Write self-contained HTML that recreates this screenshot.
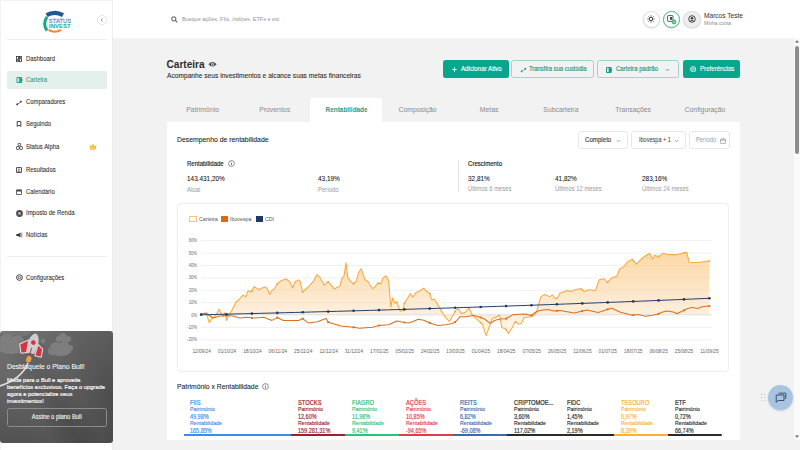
<!DOCTYPE html>
<html><head><meta charset="utf-8">
<style>
*{margin:0;padding:0;box-sizing:border-box}
html,body{width:800px;height:450px;overflow:hidden;background:#f2f2f2;font-family:"Liberation Sans",sans-serif;color:#2b2b2b}
.nav,.col,.val,.sk{-webkit-text-stroke:0.08px currentColor}
.dd,.lg{-webkit-text-stroke:0}
.a{position:absolute;white-space:nowrap}
#side{position:absolute;left:0;top:0;width:113px;height:450px;background:#fff;box-shadow:inset -1px 0 0 #ededed,inset 1px 1px 0 #f2f2f2}
#hdr{position:absolute;left:113px;top:0;width:687px;height:38px;background:#fff}
.nav{position:absolute;left:7px;width:100px;height:18px;font-size:5.9px;color:#2e2e2e}
.nav .t{position:absolute;left:19px;top:0;line-height:18px;font-size:6.6px;transform:scaleX(.9);transform-origin:0 50%}
.nav svg{position:absolute;left:9px;top:6px;width:6px;height:6px}
.tab{position:absolute;top:98px;height:24px;width:71.66px;text-align:center;line-height:23px;font-size:7.4px;color:#8a8a8a}
.tab span{display:inline-block;transform:scaleX(.93)}
.btn{position:absolute;top:60px;height:18px;border-radius:2.5px;font-size:5.6px;line-height:18px}
.dd{position:absolute;top:131px;height:18px;border:1px solid #e8e8e8;border-radius:3px;background:#fff;font-size:6px;line-height:16px;color:#333}
.lbl{font-size:6.4px;color:#9a9a9a;transform:scaleX(.92);transform-origin:0 50%}
.val{font-size:6.9px;color:#222;transform:scaleX(.93);transform-origin:0 50%}
.col{position:absolute;top:399px;font-size:6.3px;line-height:7.05px}
.col div{transform:scaleX(.87);transform-origin:0 50%;-webkit-text-stroke:0.15px currentColor}
.col .h{font-size:6.6px;transform:scaleX(.87);-webkit-text-stroke:0.2px currentColor}
.col .s{font-size:5.6px;-webkit-text-stroke:0.12px currentColor;transform:scaleX(.93)}
</style></head><body>
<!-- sidebar -->
<div id="side">
  <!-- logo -->
  <svg class="a" style="left:40px;top:6px" width="36" height="30" viewBox="40 6 36 30">
    <path d="M46.6,15.2 Q54.8,10.6 63,15.2" fill="none" stroke="#1d5a91" stroke-width="4.3"/>
    <path d="M47,16.8 Q42.4,23.7 47,30.6" fill="none" stroke="#16a98c" stroke-width="3"/>
    <path d="M48.5,30 Q54.8,33.4 61,30" fill="none" stroke="#f08a2b" stroke-width="2"/>
    <text x="48.8" y="23" font-size="5.9" fill="#c4d6e6" stroke="#4a7eae" stroke-width="0.28" font-family="Liberation Sans" textLength="22.5" lengthAdjust="spacingAndGlyphs">STATUS</text>
    <text x="49" y="28.1" font-size="6.1" font-weight="bold" fill="#16a98c" font-family="Liberation Sans" textLength="21.7" lengthAdjust="spacingAndGlyphs">INVEST</text>
  </svg>
  <div class="a" style="left:97px;top:14.5px;width:10px;height:10px;border:1px solid #e4e4e4;border-radius:50%;background:#fff"></div>
  <svg class="a" style="left:100px;top:17.5px" width="4" height="4" viewBox="0 0 4 4"><path d="M2.6,0.5 L1.2,2 L2.6,3.5" fill="none" stroke="#666" stroke-width="0.7"/></svg>
  <div class="a" style="left:7px;top:38.5px;width:100px;height:1px;background:#eeeeee"></div>

  <div class="nav" style="top:49.5px"><svg viewBox="0 0 6 6"><g fill="none" stroke="#3a3a3a" stroke-width="0.85"><rect x="0.45" y="0.45" width="2.1" height="2.9"/><rect x="0.45" y="4.1" width="2.1" height="1.45"/><rect x="3.45" y="0.45" width="2.1" height="1.45"/><rect x="3.45" y="2.65" width="2.1" height="2.9"/></g></svg><span class="t">Dashboard</span></div>
  <div class="nav" style="top:71px;background:#e3f0ec;border-radius:2px;color:#2aa088"><svg viewBox="0 0 6 6" style="width:7px;left:9px"><path d="M0.5,0.5h4.6v5h-4.6z" fill="none" stroke="#22a58a" stroke-width="1"/><path d="M2.6,0.5h2.5v5h-2.5z" fill="#22a58a"/><path d="M5.1,1.8 L6.4,3 L5.1,4.2z" fill="#22a58a"/></svg><span class="t">Carteira</span></div>
  <div class="nav" style="top:93px"><svg viewBox="0 0 6 6" style="top:6.5px"><path d="M1,4.5 L5,1.8" stroke="#333" stroke-width="0.7"/><path d="M3.8,0.6 L6,1.2 L4.8,3.2z M2.2,5.4 L0,4.8 L1.2,2.8z" fill="#333"/></svg><span class="t">Comparadores</span></div>
  <div class="nav" style="top:114.5px"><svg viewBox="0 0 6 6"><path d="M1.2,0.5h3.6v5l-1.8,-1.3l-1.8,1.3z" fill="none" stroke="#333" stroke-width="0.9" stroke-linejoin="round"/></svg><span class="t">Seguindo</span></div>
  <div class="nav" style="top:137.5px"><svg viewBox="0 0 7 7" style="width:7px;height:7px;left:8.5px;top:5px"><g fill="none" stroke="#3a3a3a" stroke-width="0.8"><rect x="2.1" y="0.5" width="2.6" height="2.4" rx="0.5"/><rect x="0.5" y="3.6" width="2.7" height="2.8" rx="0.5"/><rect x="3.7" y="3.6" width="2.7" height="2.8" rx="0.5"/></g></svg><span class="t">Status Alpha</span>
    <svg style="left:82px;top:5px;width:8px;height:7.5px" viewBox="0 0 8 7.5"><path d="M0.6,1.6 L2.4,3.6 L4,0.6 L5.6,3.6 L7.4,1.6 L6.8,6.8 H1.2Z" fill="#f5b942"/><path d="M1.9,4.6 L2.4,5.6 H5.6 L6.1,4.6" fill="none" stroke="#fff" stroke-width="0.6" opacity="0.8"/></svg></div>
  <div class="nav" style="top:161px"><svg viewBox="0 0 6 6"><rect x="0.45" y="0.45" width="5.1" height="5.1" rx="0.5" fill="none" stroke="#3a3a3a" stroke-width="0.9"/><path d="M2.3,1.5V4.5 M3.7,1.5V3.5 M1.5,4.5H4.5" stroke="#3a3a3a" stroke-width="0.6"/></svg><span class="t">Resultados</span></div>
  <div class="nav" style="top:182.5px"><svg viewBox="0 0 6 6"><rect x="0.4" y="0.9" width="5.2" height="4.7" rx="0.5" fill="none" stroke="#444" stroke-width="0.9"/><rect x="0.4" y="0.9" width="5.2" height="1.6" fill="#444"/></svg><span class="t">Calendário</span></div>
  <div class="nav" style="top:204px"><svg viewBox="0 0 7 7" style="width:7px;height:7px;left:8.5px;top:5.5px"><circle cx="3.5" cy="3.5" r="3.4" fill="#4a4a4a"/><circle cx="3.5" cy="3.2" r="1.3" fill="#bdbdbd"/><path d="M1.2,5 Q3.5,3.6 5.8,5" stroke="#9a9a9a" stroke-width="0.6" fill="none"/></svg><span class="t">Imposto de Renda</span></div>
  <div class="nav" style="top:226px"><svg viewBox="0 0 7 6" style="width:7px;left:8.5px"><path d="M0.3,2h1.6l2.6,-1.6v5.2l-2.6,-1.6h-1.6z" fill="#3a3a3a"/><path d="M5.8,0.6v4.8" stroke="#3a3a3a" stroke-width="0.6"/></svg><span class="t">Notícias</span></div>
  <div class="a" style="left:7px;top:255.5px;width:100px;height:1px;background:#eeeeee"></div>
  <div class="nav" style="top:268.5px"><svg viewBox="0 0 7 7" style="width:7px;height:7px;left:8.5px;top:5.5px"><path d="M3.5,0.4 L6.2,1.95 V5.05 L3.5,6.6 L0.8,5.05 V1.95Z" fill="none" stroke="#3a3a3a" stroke-width="0.9" stroke-linejoin="round"/><circle cx="3.5" cy="3.5" r="1.2" fill="none" stroke="#3a3a3a" stroke-width="0.8"/></svg><span class="t">Configurações</span></div>

  <!-- promo card -->
  <div class="a" style="left:0;top:330.5px;width:113px;height:112.5px;border-radius:3px;overflow:hidden;background:linear-gradient(150deg,#6a6a6a 0%,#606060 30%,#575757 50%,#4d4d4d 75%,#454545 100%)">
    <div class="a" style="left:0;top:0;width:113px;height:113px;background:linear-gradient(60deg,rgba(255,255,255,0) 0%,rgba(255,255,255,0.05) 30%,rgba(255,255,255,0.0) 45%,rgba(255,255,255,0.04) 60%,rgba(255,255,255,0) 80%)"></div>
    <svg class="a" style="left:0;top:0" width="113" height="113" viewBox="0 0 113 113">
      <g fill="#7e7e7e" opacity="0.6">
        <ellipse cx="10" cy="2" rx="9" ry="3"/><ellipse cx="24" cy="2" rx="6" ry="3"/>
      </g>
      <g fill="#7e7e7e" opacity="1">
        <circle cx="7" cy="11" r="8"/><circle cx="18" cy="10" r="6"/><circle cx="25" cy="15" r="5"/><ellipse cx="12" cy="16" rx="15" ry="7"/>
        <circle cx="63" cy="6" r="4"/><circle cx="59" cy="8" r="3"/><circle cx="68" cy="8" r="3"/><rect x="56" y="6" width="14" height="4" rx="2"/>
        <circle cx="56" cy="17" r="6"/><circle cx="64" cy="15" r="5"/><circle cx="70" cy="17" r="3"/><circle cx="52" cy="20" r="4"/><ellipse cx="61" cy="20" rx="10" ry="5"/>
        <circle cx="43" cy="10" r="2.4"/>
      </g>
      <path d="M28,32 C24,42 15,50 0,55" stroke="#ececec" stroke-width="1.7" fill="none" opacity="0.9"/>
      <path d="M19.8,13.1 L28.4,9 L28.4,21.4 L21,22.2Z" fill="#d63344" stroke="#dcdcdc" stroke-width="1.1" stroke-linejoin="round"/>
      <path d="M38,13.5 L42.7,18.2 L41.1,26.3 L34.9,24.8Z" fill="#d63344" stroke="#dcdcdc" stroke-width="1.1" stroke-linejoin="round"/>
      <g transform="translate(33,12.5) rotate(17)">
        <path d="M0,-10.5 C3.5,-9.5 5.4,-4 5.2,1 L4.2,10 L-4.2,10 L-5.2,1 C-5.4,-4 -3.5,-9.5 0,-10.5Z" fill="#cdcdcd"/>
        <circle cx="0" cy="-1" r="2.3" fill="#d63344"/>
        <path d="M-0.5,4.5 h1v8h-1z" fill="#d63344"/>
      </g>
      <ellipse cx="28.8" cy="28.2" rx="2.6" ry="3.4" transform="rotate(17 28.8 28.2)" fill="#e8a040"/>
    </svg>
    <div class="a" style="left:7px;top:32px;font-size:7.3px;color:#fafafa;line-height:8px;transform:scaleX(.93);transform-origin:0 50%;-webkit-text-stroke:0.08px #f6f6f6">Desbloqueie o Plano Bull!</div>
    <div class="a" style="left:7px;top:45.3px;font-size:6.2px;color:#fff;line-height:7.2px;transform:scaleX(.93);transform-origin:0 50%;-webkit-text-stroke:0.16px #fff">Mude para o Bull e aproveite<br>benefícios exclusivos. Faça o upgrade<br>agora e potencialize seus<br>investimentos!</div>
    <div class="a" style="left:7px;top:77.3px;width:99.7px;height:18.8px;border:1px solid #8c8c8c;border-radius:2.5px;text-align:center;line-height:16.5px;font-size:6.3px;color:#f5f5f5;-webkit-text-stroke:0.12px #f5f5f5"><span style="display:inline-block;transform:scaleX(.93)">Assine o plano Bull</span></div>
  </div>
</div>

<!-- header -->
<div id="hdr"></div>
<svg class="a" style="left:170.8px;top:16px" width="7" height="7" viewBox="0 0 7 7"><circle cx="2.8" cy="2.8" r="2.1" fill="none" stroke="#666" stroke-width="1.05"/><path d="M4.3,4.3 L6.3,6.3" stroke="#666" stroke-width="1.2"/></svg>
<div class="a" style="left:182px;top:15.3px;font-size:6.1px;line-height:8px;color:#929292;transform:scaleX(.905);transform-origin:0 50%">Busque ações, FIIs, índices, ETFs e etc</div>

<div class="a" style="left:642.5px;top:10.5px;width:17.5px;height:17.5px;border-radius:50%;border:1px solid #e0e0e0;background:#fff;box-shadow:0 0.5px 1.5px rgba(0,0,0,0.18)"></div>
<svg class="a" style="left:647.3px;top:15.3px" width="8" height="8" viewBox="0 0 8 8"><circle cx="4" cy="4" r="1.7" fill="none" stroke="#333" stroke-width="0.9"/><path d="M4,0.3v1.4 M4,6.3v1.4 M0.3,4h1.4 M6.3,4h1.4 M1.4,1.4l1,1 M5.6,5.6l1,1 M1.4,6.6l1,-1 M5.6,2.4l1,-1" stroke="#333" stroke-width="0.8"/></svg>
<div class="a" style="left:662.5px;top:10.5px;width:17.5px;height:17.5px;border-radius:50%;border:1.3px solid #3cbf7f;background:#fff;box-shadow:0 0.5px 1.5px rgba(0,0,0,0.18)"></div>
<svg class="a" style="left:667px;top:15px" width="10" height="10" viewBox="0 0 10 10"><rect x="0.6" y="0.6" width="5.4" height="5.8" rx="0.6" fill="none" stroke="#444" stroke-width="0.9"/><rect x="3" y="2" width="2" height="2.8" fill="#444"/><circle cx="7" cy="7" r="2.4" fill="#3cbf7f"/><path d="M6,7h2" stroke="#fff" stroke-width="0.6"/></svg>
<div class="a" style="left:683px;top:10.5px;width:17.5px;height:17.5px;border-radius:50%;border:1px solid #e0e0e0;background:#eeeeee;box-shadow:0 0.5px 1.5px rgba(0,0,0,0.18)"></div>
<svg class="a" style="left:687.8px;top:15.3px" width="8" height="8" viewBox="0 0 8 8"><circle cx="4" cy="4" r="3.3" fill="none" stroke="#3a3a3a" stroke-width="0.9"/><circle cx="4" cy="3.3" r="1.3" fill="#3a3a3a"/><path d="M1.8,6.4 Q4,4.3 6.2,6.4" fill="none" stroke="#3a3a3a" stroke-width="0.9"/></svg>
<div class="a" style="left:704px;top:11.5px;font-size:7px;line-height:8px;color:#3a3a3a;-webkit-text-stroke:0.05px #3a3a3a;transform:scaleX(.94);transform-origin:0 50%">Marcos Teste</div>
<div class="a" style="left:704px;top:20px;font-size:5.6px;line-height:7px;color:#8a8a8a;transform:scaleX(.89);transform-origin:0 50%">Minha conta</div>

<!-- scrollbar -->
<div class="a" style="left:794px;top:38px;width:6px;height:402px;background:#fafafa"></div>
<svg class="a" style="left:794px;top:39px" width="6" height="5" viewBox="0 0 6 5"><path d="M3,1.2 L5,3.6 H1Z" fill="#606060"/></svg>
<div class="a" style="left:795px;top:45.5px;width:4px;height:108px;border-radius:2px;background:#8c8c8c"></div>
<svg class="a" style="left:794px;top:434px" width="6" height="5" viewBox="0 0 6 5"><path d="M3,3.8 L5,1.4 H1Z" fill="#606060"/></svg>

<!-- title -->
<div class="a" style="left:166.5px;top:59px;font-size:10.1px;line-height:12px;font-weight:bold;color:#2e2e2e">Carteira</div>
<svg class="a" style="left:208px;top:60.6px" width="9" height="6.5" viewBox="0 0 9 6.5"><path d="M0.4,3.25 Q4.5,-1.2 8.6,3.25 Q4.5,7.7 0.4,3.25Z" fill="#4a4a4a"/><circle cx="4.5" cy="3.25" r="1.5" fill="#d8d8d8"/><circle cx="4.5" cy="3.25" r="0.7" fill="#4a4a4a"/></svg>
<div class="a sk" style="left:167px;top:72px;font-size:6.65px;line-height:8px;color:#2a2a2a">Acompanhe seus investimentos e alcance suas metas financeiras</div>

<!-- buttons -->
<div class="btn" style="left:443px;width:65.5px;background:#08a78d;color:#fff"><svg class="a" style="left:9px;top:6.5px" width="5" height="5" viewBox="0 0 5 5"><path d="M2.5,0.3v4.4 M0.3,2.5h4.4" stroke="#fff" stroke-width="0.9"/></svg><span class="a" style="left:18px;font-size:6.6px;-webkit-text-stroke:0.12px #fff;transform:scaleX(.935);transform-origin:0 50%">Adicionar Ativo</span></div>
<div class="btn" style="left:511px;width:82.5px;border:1px solid #98d8cd;background:transparent;color:#1c9b82"><svg class="a" style="left:8px;top:6px" width="7" height="6" viewBox="0 0 6 6"><path d="M1,4.5 L5,1.8" stroke="#1c9b82" stroke-width="0.7"/><path d="M3.8,0.6 L6,1.2 L4.8,3.2z M2.2,5.4 L0,4.8 L1.2,2.8z" fill="#1c9b82"/></svg><span class="a" style="left:16.8px;top:-1px;font-size:6.4px;-webkit-text-stroke:0.14px #178d76;transform:scaleX(.92);transform-origin:0 50%">Transfira sua custódia</span></div>
<div class="btn" style="left:597px;width:82px;border:1px solid #98d8cd;background:transparent;color:#1c9b82"><svg class="a" style="left:7.5px;top:5.5px" width="7" height="6" viewBox="0 0 7 6"><path d="M0.5,0.5h4.6v5h-4.6z" fill="none" stroke="#1c9b82" stroke-width="1"/><path d="M2.6,0.5h2.5v5h-2.5z" fill="#1c9b82"/><path d="M5.1,1.8 L6.4,3 L5.1,4.2z" fill="#1c9b82"/></svg><span class="a" style="left:17.5px;top:-1px;font-size:6.5px;-webkit-text-stroke:0.14px #178d76;transform:scaleX(.93);transform-origin:0 50%">Carteira padrão</span><svg class="a" style="left:67px;top:6.5px" width="5" height="4" viewBox="0 0 5 4"><path d="M0.8,1 L2.5,2.8 L4.2,1" fill="none" stroke="#1c9b82" stroke-width="0.7"/></svg></div>
<div class="btn" style="left:682.5px;width:57.5px;background:#08a78d;color:#fff"><svg class="a" style="left:7px;top:5.8px" width="6.5" height="6.5" viewBox="0 0 7 7"><path d="M3.5,0.4 L6.2,1.95 V5.05 L3.5,6.6 L0.8,5.05 V1.95Z" fill="none" stroke="#fff" stroke-width="0.9" stroke-linejoin="round"/><circle cx="3.5" cy="3.5" r="1.2" fill="none" stroke="#fff" stroke-width="0.8"/></svg><span class="a" style="left:17.2px;font-size:6.6px;-webkit-text-stroke:0.1px #fff;transform:scaleX(.93);transform-origin:0 50%">Preferências</span></div>

<!-- tabs -->
<div class="tab" style="left:167px"><span>Patrimônio</span></div>
<div class="tab" style="left:238.66px"><span>Proventos</span></div>
<div class="tab" style="left:310.33px;background:#fff;border-radius:2px 2px 0 0;color:#1f9e85;font-weight:bold;font-size:6.9px"><span>Rentabilidade</span></div>
<div class="tab" style="left:382px"><span>Composição</span></div>
<div class="tab" style="left:453.66px"><span>Metas</span></div>
<div class="tab" style="left:525.33px"><span>Subcarteira</span></div>
<div class="tab" style="left:597px"><span>Transações</span></div>
<div class="tab" style="left:668.66px"><span>Configuração</span></div>

<!-- content card -->
<div class="a" style="left:167px;top:122px;width:573.3px;height:318px;background:#fff"></div>
<div class="a sk" style="left:177px;top:136px;font-size:7.3px;line-height:8px;color:#222;transform:scaleX(.94);transform-origin:0 50%">Desempenho de rentabilidade</div>

<div class="dd" style="left:577.5px;width:50.5px"><span class="a" style="left:6.5px;font-size:6.6px;color:#333;-webkit-text-stroke:0.1px #333;transform:scaleX(.93);transform-origin:0 50%">Completo</span><svg class="a" style="left:37px;top:6.5px" width="5" height="4" viewBox="0 0 5 4"><path d="M0.8,1 L2.5,2.8 L4.2,1" fill="none" stroke="#777" stroke-width="0.6"/></svg></div>
<div class="dd" style="left:631px;width:55.3px"><span class="a" style="left:6.5px;font-size:6.3px;color:#333;transform:scaleX(.88);transform-origin:0 50%">Ibovespa + 1</span><svg class="a" style="left:41.5px;top:6.5px" width="5" height="4" viewBox="0 0 5 4"><path d="M0.8,1 L2.5,2.8 L4.2,1" fill="none" stroke="#777" stroke-width="0.6"/></svg></div>
<div class="dd" style="left:689.3px;width:41px"><span class="a" style="left:5.5px;font-size:6.3px;color:#9a9a9a;transform:scaleX(.92);transform-origin:0 50%">Período</span><svg class="a" style="left:29.5px;top:5.5px" width="6" height="6" viewBox="0 0 6 6"><rect x="0.5" y="1" width="5" height="4.5" rx="0.6" fill="none" stroke="#888" stroke-width="0.6"/><path d="M0.5,2.4h5 M1.8,0.3v1.2 M4.2,0.3v1.2" stroke="#888" stroke-width="0.6"/></svg></div>

<!-- stats -->
<div class="a" style="left:186.8px;top:159.5px;font-size:6.6px;line-height:8px;color:#222;-webkit-text-stroke:0.15px #222;transform:scaleX(.91);transform-origin:0 50%">Rentabilidade</div>
<svg class="a" style="left:227.5px;top:159.8px" width="7" height="7" viewBox="0 0 7 7"><circle cx="3.5" cy="3.5" r="2.9" fill="none" stroke="#444" stroke-width="0.6"/><path d="M3.5,3v2" stroke="#444" stroke-width="0.7"/><circle cx="3.5" cy="2" r="0.45" fill="#444"/></svg>
<div class="a val" style="left:186.8px;top:175px;line-height:8px">143.431,20%</div>
<div class="a lbl" style="left:186.8px;top:186px;line-height:8px">Atual</div>
<div class="a val" style="left:317.5px;top:175px;line-height:8px">43,19%</div>
<div class="a lbl" style="left:317.5px;top:186px;line-height:8px">Período</div>
<div class="a" style="left:457.5px;top:159.5px;width:1px;height:32.5px;background:#e6e6e6"></div>
<div class="a" style="left:467.8px;top:159.5px;font-size:6.6px;line-height:8px;color:#222;-webkit-text-stroke:0.15px #222;transform:scaleX(.92);transform-origin:0 50%">Crescimento</div>
<div class="a val" style="left:467.8px;top:175px;line-height:8px">32,81%</div>
<div class="a lbl" style="left:467.8px;top:185px;line-height:8px">Últimos 6 meses</div>
<div class="a val" style="left:554.7px;top:175px;line-height:8px">41,82%</div>
<div class="a lbl" style="left:554.7px;top:185px;line-height:8px">Últimos 12 meses</div>
<div class="a val" style="left:641.6px;top:175px;line-height:8px">283,16%</div>
<div class="a lbl" style="left:641.6px;top:185px;line-height:8px">Últimos 24 meses</div>

<!-- chart card -->
<div class="a" style="left:177px;top:203px;width:551.5px;height:169px;border:1px solid #ededed;border-radius:4px;background:#fff"></div>
<div class="a" style="left:189.2px;top:216.3px;width:7.5px;height:5.4px;border:0.8px solid #f9c27a;background:#fff"></div>
<div class="a" style="left:198.5px;top:215px;font-size:5.8px;line-height:8px;color:#555;transform:scaleX(.91);transform-origin:0 50%">Carteira</div>
<div class="a" style="left:221.4px;top:216.3px;width:7px;height:5.4px;background:#dd6a10"></div>
<div class="a" style="left:230.3px;top:215px;font-size:5.8px;line-height:8px;color:#555;transform:scaleX(.91);transform-origin:0 50%">Ibovespa</div>
<div class="a" style="left:255.9px;top:216.3px;width:7px;height:5.4px;background:#1d3b63"></div>
<div class="a" style="left:264.8px;top:215px;font-size:5.8px;line-height:8px;color:#555;transform:scaleX(.91);transform-origin:0 50%">CDI</div>

<svg class="a" style="left:0;top:0" width="800" height="450" viewBox="0 0 800 450">
  <defs>
    <linearGradient id="cg" x1="0" y1="250" x2="0" y2="340" gradientUnits="userSpaceOnUse">
      <stop offset="0" stop-color="#fcd49c"/>
      <stop offset="0.72" stop-color="#fdeedb"/>
      <stop offset="1" stop-color="#fff8f0"/>
    </linearGradient>
  </defs>
  
  <g font-family="Liberation Sans" font-size="4.9" fill="#6a6a6a" text-anchor="end">
    <text x="197" y="242.2" textLength="8.3" lengthAdjust="spacingAndGlyphs">60%</text><text x="197" y="254.6" textLength="8.3" lengthAdjust="spacingAndGlyphs">50%</text><text x="197" y="267" textLength="8.3" lengthAdjust="spacingAndGlyphs">40%</text><text x="197" y="279.4" textLength="8.3" lengthAdjust="spacingAndGlyphs">30%</text><text x="197" y="291.8" textLength="8.3" lengthAdjust="spacingAndGlyphs">20%</text><text x="197" y="304.2" textLength="8.3" lengthAdjust="spacingAndGlyphs">10%</text><text x="197" y="316.5" textLength="5.8" lengthAdjust="spacingAndGlyphs">0%</text><text x="197" y="328.9" textLength="10" lengthAdjust="spacingAndGlyphs">-10%</text><text x="197" y="341.3" textLength="10" lengthAdjust="spacingAndGlyphs">-20%</text>
  </g>
  <g stroke="#f0f2f7" stroke-width="0.8">
    <path d="M200.7,240.7H711.7 M200.7,253.1H711.7 M200.7,265.5H711.7 M200.7,277.9H711.7 M200.7,290.3H711.7 M200.7,302.7H711.7 M200.7,327.4H711.7 M200.7,339.8H711.7"/>
  </g>
  <path d="M201.1,314.0 L204.0,313.3 L206.7,314.7 L209.3,322.7 L212.7,318.0 L216.0,315.3 L219.0,309.3 L221.3,314.0 L223.3,316.7 L224.7,312.7 L226.7,320.4 L228.7,315.3 L232.0,310.0 L236.0,302.0 L238.7,300.0 L242.7,295.3 L246.0,296.7 L248.0,290.7 L251.3,292.0 L254.0,286.7 L259.4,289.7 L262.1,287.9 L265.7,287.0 L267.4,288.8 L269.6,294.5 L271.9,290.6 L274.6,288.8 L277.2,283.8 L280.8,280.8 L286.1,279.0 L289.7,281.7 L292.7,287.9 L295.0,281.7 L298.6,279.9 L300.3,281.7 L302.6,292.0 L308.3,287.0 L313.7,280.8 L316.9,274.6 L319.9,277.2 L324.3,285.2 L327.9,281.7 L330.6,284.3 L334.4,289.1 L337.1,287.3 L339.8,286.4 L342.1,277.6 L343.9,276.7 L346.0,262.8 L347.8,277.6 L350.4,281.1 L353.5,283.8 L356.3,281.1 L358.4,273.1 L361.1,268.7 L362.9,273.1 L364.7,279.3 L368.2,282.0 L372.7,288.8 L375.3,286.4 L378.0,282.9 L380.7,283.8 L383.3,277.6 L386.0,275.8 L388.7,281.1 L390.8,306.9 L392.6,298.0 L394.9,303.3 L396.7,301.6 L400.2,311.3 L402.9,310.4 L404.3,303.3 L407.7,298.0 L410.3,293.6 L413.0,297.1 L415.7,292.7 L419.2,291.2 L423.7,288.2 L427.2,291.8 L429.9,293.6 L431.7,299.8 L434.3,298.9 L437.0,303.3 L440.6,309.6 L445.0,316.7 L449.4,321.5 L452.1,316.7 L455.7,310.4 L458.3,308.7 L461.5,313.6 L465.4,312.2 L469.0,307.8 L471.7,314.0 L474.3,316.7 L477.9,320.2 L482.3,324.1 L486.2,335.6 L489.5,326.2 L492.4,318.3 L496.0,317.3 L499.6,315.0 L501.8,327.7 L505.4,328.4 L508.3,333.5 L512.6,327.0 L515.5,321.2 L518.4,324.1 L521.3,323.4 L524.2,317.6 L530.7,316.8 L535.0,314.7 L536.8,311.1 L540.8,296.6 L545.1,294.5 L549.5,296.6 L552.7,295.2 L555.3,298.8 L557.4,298.1 L560.0,293.0 L562.7,292.2 L567.1,290.4 L570.7,291.6 L576.0,289.5 L581.4,288.6 L584.0,291.6 L588.5,289.8 L595.6,290.4 L599.1,279.7 L604.5,278.8 L607.2,282.7 L611.6,277.9 L616.9,276.1 L619.6,269.0 L624.1,266.4 L627.6,261.9 L632.1,259.2 L636.5,264.2 L641.9,258.3 L649.0,253.5 L650.3,254.2 L652.5,259.2 L654.8,255.1 L658.3,256.9 L662.8,253.3 L668.1,254.6 L677.0,254.6 L682.3,253.3 L686.8,252.1 L689.1,262.2 L696.6,262.6 L703.7,261.7 L709.4,261.0 L709.4,314.8 L201.1,314.8 Z" fill="url(#cg)" opacity="0.92"/>
  <g stroke="#8a6a40" stroke-opacity="0.045" stroke-width="0.8">
    <path d="M200.7,240.7H711.7 M200.7,253.1H711.7 M200.7,265.5H711.7 M200.7,277.9H711.7 M200.7,290.3H711.7 M200.7,302.7H711.7 M200.7,327.4H711.7 M200.7,339.8H711.7"/>
  </g>
  <path d="M200.7,314.8H711.7" stroke="#d8d8d8" stroke-width="0.8"/>
  <path d="M201.1,314.0 L204.0,313.3 L206.7,314.7 L209.3,322.7 L212.7,318.0 L216.0,315.3 L219.0,309.3 L221.3,314.0 L223.3,316.7 L224.7,312.7 L226.7,320.4 L228.7,315.3 L232.0,310.0 L236.0,302.0 L238.7,300.0 L242.7,295.3 L246.0,296.7 L248.0,290.7 L251.3,292.0 L254.0,286.7 L259.4,289.7 L262.1,287.9 L265.7,287.0 L267.4,288.8 L269.6,294.5 L271.9,290.6 L274.6,288.8 L277.2,283.8 L280.8,280.8 L286.1,279.0 L289.7,281.7 L292.7,287.9 L295.0,281.7 L298.6,279.9 L300.3,281.7 L302.6,292.0 L308.3,287.0 L313.7,280.8 L316.9,274.6 L319.9,277.2 L324.3,285.2 L327.9,281.7 L330.6,284.3 L334.4,289.1 L337.1,287.3 L339.8,286.4 L342.1,277.6 L343.9,276.7 L346.0,262.8 L347.8,277.6 L350.4,281.1 L353.5,283.8 L356.3,281.1 L358.4,273.1 L361.1,268.7 L362.9,273.1 L364.7,279.3 L368.2,282.0 L372.7,288.8 L375.3,286.4 L378.0,282.9 L380.7,283.8 L383.3,277.6 L386.0,275.8 L388.7,281.1 L390.8,306.9 L392.6,298.0 L394.9,303.3 L396.7,301.6 L400.2,311.3 L402.9,310.4 L404.3,303.3 L407.7,298.0 L410.3,293.6 L413.0,297.1 L415.7,292.7 L419.2,291.2 L423.7,288.2 L427.2,291.8 L429.9,293.6 L431.7,299.8 L434.3,298.9 L437.0,303.3 L440.6,309.6 L445.0,316.7 L449.4,321.5 L452.1,316.7 L455.7,310.4 L458.3,308.7 L461.5,313.6 L465.4,312.2 L469.0,307.8 L471.7,314.0 L474.3,316.7 L477.9,320.2 L482.3,324.1 L486.2,335.6 L489.5,326.2 L492.4,318.3 L496.0,317.3 L499.6,315.0 L501.8,327.7 L505.4,328.4 L508.3,333.5 L512.6,327.0 L515.5,321.2 L518.4,324.1 L521.3,323.4 L524.2,317.6 L530.7,316.8 L535.0,314.7 L536.8,311.1 L540.8,296.6 L545.1,294.5 L549.5,296.6 L552.7,295.2 L555.3,298.8 L557.4,298.1 L560.0,293.0 L562.7,292.2 L567.1,290.4 L570.7,291.6 L576.0,289.5 L581.4,288.6 L584.0,291.6 L588.5,289.8 L595.6,290.4 L599.1,279.7 L604.5,278.8 L607.2,282.7 L611.6,277.9 L616.9,276.1 L619.6,269.0 L624.1,266.4 L627.6,261.9 L632.1,259.2 L636.5,264.2 L641.9,258.3 L649.0,253.5 L650.3,254.2 L652.5,259.2 L654.8,255.1 L658.3,256.9 L662.8,253.3 L668.1,254.6 L677.0,254.6 L682.3,253.3 L686.8,252.1 L689.1,262.2 L696.6,262.6 L703.7,261.7 L709.4,261.0" fill="none" stroke="#f8aa3e" stroke-width="1.05" stroke-linejoin="round"/>
  <g fill="#f8aa3e"><circle cx="201.1" cy="314.0" r="0.9"/><circle cx="226.5" cy="319.7" r="0.9"/><circle cx="251.9" cy="290.8" r="0.9"/><circle cx="277.3" cy="283.7" r="0.9"/><circle cx="302.8" cy="291.9" r="0.9"/><circle cx="328.2" cy="282.0" r="0.9"/><circle cx="353.6" cy="283.7" r="0.9"/><circle cx="379.0" cy="283.2" r="0.9"/><circle cx="404.4" cy="303.1" r="0.9"/><circle cx="429.8" cy="293.6" r="0.9"/><circle cx="455.2" cy="311.2" r="0.9"/><circle cx="480.7" cy="322.7" r="0.9"/><circle cx="506.1" cy="329.6" r="0.9"/><circle cx="531.5" cy="316.4" r="0.9"/><circle cx="556.9" cy="298.3" r="0.9"/><circle cx="582.3" cy="289.7" r="0.9"/><circle cx="607.7" cy="282.1" r="0.9"/><circle cx="633.2" cy="260.4" r="0.9"/><circle cx="658.6" cy="256.7" r="0.9"/><circle cx="684.0" cy="252.9" r="0.9"/><circle cx="709.4" cy="261.0" r="0.9"/></g>
  <path d="M201.1,314.0 L206.0,313.0 L213.0,318.0 L220.0,316.0 L227.0,315.5 L233.0,316.0 L240.0,318.0 L247.0,317.3 L253.0,318.0 L255.0,318.1 L263.9,317.2 L271.9,320.4 L277.2,317.6 L283.4,320.4 L298.6,320.4 L302.6,318.6 L308.3,322.9 L317.2,321.7 L326.1,318.6 L328.2,322.2 L335.0,324.3 L340.7,326.1 L354.0,327.3 L359.3,328.2 L372.7,327.3 L378.9,325.6 L388.7,324.7 L396.7,321.1 L404.7,322.5 L408.6,322.9 L413.0,321.5 L418.3,319.3 L423.7,320.2 L429.9,322.9 L437.9,325.6 L445.9,324.7 L451.2,323.8 L454.8,322.5 L460.1,316.7 L465.4,316.7 L473.4,315.4 L480.1,317.3 L484.5,319.0 L490.2,323.4 L494.6,320.5 L499.6,319.0 L506.1,318.7 L513.4,314.4 L524.9,314.0 L531.4,315.4 L535.0,312.5 L539.4,310.6 L548.0,309.6 L553.8,311.1 L560.0,310.5 L567.1,311.7 L574.2,313.0 L581.4,311.2 L586.7,310.0 L598.3,312.6 L607.2,309.4 L611.6,308.2 L620.5,312.3 L632.1,315.3 L638.3,314.4 L645.4,316.2 L652.5,315.3 L657.4,314.3 L662.8,312.0 L666.3,311.1 L673.4,312.0 L677.0,313.8 L680.6,312.0 L683.2,310.8 L687.7,308.4 L692.1,307.6 L698.3,308.4 L701.9,306.7 L709.4,306.1" fill="none" stroke="#dc6e1c" stroke-width="1.05" stroke-linejoin="round"/>
  <g fill="#dc6e1c"><circle cx="201.1" cy="314.0" r="1.1"/><circle cx="226.5" cy="315.5" r="1.1"/><circle cx="251.9" cy="317.9" r="1.1"/><circle cx="277.3" cy="317.7" r="1.1"/><circle cx="302.8" cy="318.7" r="1.1"/><circle cx="328.2" cy="322.2" r="1.1"/><circle cx="353.6" cy="327.3" r="1.1"/><circle cx="379.0" cy="325.6" r="1.1"/><circle cx="404.4" cy="322.5" r="1.1"/><circle cx="429.8" cy="322.9" r="1.1"/><circle cx="455.2" cy="322.0" r="1.1"/><circle cx="480.7" cy="317.5" r="1.1"/><circle cx="506.1" cy="318.7" r="1.1"/><circle cx="531.5" cy="315.3" r="1.1"/><circle cx="556.9" cy="310.8" r="1.1"/><circle cx="582.3" cy="311.0" r="1.1"/><circle cx="607.7" cy="309.3" r="1.1"/><circle cx="633.2" cy="315.1" r="1.1"/><circle cx="658.6" cy="313.8" r="1.1"/><circle cx="684.0" cy="310.4" r="1.1"/><circle cx="709.4" cy="306.1" r="1.1"/></g>
  <path d="M201.1,314.80 L209.6,314.60 L218.0,314.39 L226.5,314.19 L235.0,313.98 L243.5,313.77 L251.9,313.56 L260.4,313.34 L268.9,313.13 L277.3,312.91 L285.8,312.69 L294.3,312.47 L302.8,312.24 L311.2,312.01 L319.7,311.78 L328.2,311.55 L336.6,311.32 L345.1,311.08 L353.6,310.84 L362.1,310.60 L370.5,310.36 L379.0,310.11 L387.5,309.86 L395.9,309.61 L404.4,309.36 L412.9,309.10 L421.4,308.84 L429.8,308.58 L438.3,308.31 L446.8,308.05 L455.2,307.78 L463.7,307.51 L472.2,307.23 L480.7,306.95 L489.1,306.67 L497.6,306.39 L506.1,306.10 L514.6,305.81 L523.0,305.52 L531.5,305.23 L540.0,304.93 L548.4,304.63 L556.9,304.32 L565.4,304.02 L573.9,303.71 L582.3,303.39 L590.8,303.08 L599.3,302.76 L607.7,302.44 L616.2,302.11 L624.7,301.78 L633.2,301.45 L641.6,301.11 L650.1,300.77 L658.6,300.43 L667.0,300.08 L675.5,299.73 L684.0,299.38 L692.5,299.02 L700.9,298.66 L709.4,298.30" fill="none" stroke="#22406a" stroke-width="1"/>
  <g fill="#1d3b63"><circle cx="201.1" cy="314.8" r="1.3"/><circle cx="226.5" cy="314.2" r="1.3"/><circle cx="251.9" cy="313.6" r="1.3"/><circle cx="277.3" cy="312.9" r="1.3"/><circle cx="302.8" cy="312.2" r="1.3"/><circle cx="328.2" cy="311.6" r="1.3"/><circle cx="353.6" cy="310.8" r="1.3"/><circle cx="379.0" cy="310.1" r="1.3"/><circle cx="404.4" cy="309.4" r="1.3"/><circle cx="429.8" cy="308.6" r="1.3"/><circle cx="455.2" cy="307.8" r="1.3"/><circle cx="480.7" cy="307.0" r="1.3"/><circle cx="506.1" cy="306.1" r="1.3"/><circle cx="531.5" cy="305.2" r="1.3"/><circle cx="556.9" cy="304.3" r="1.3"/><circle cx="582.3" cy="303.4" r="1.3"/><circle cx="607.7" cy="302.4" r="1.3"/><circle cx="633.2" cy="301.4" r="1.3"/><circle cx="658.6" cy="300.4" r="1.3"/><circle cx="684.0" cy="299.4" r="1.3"/><circle cx="709.4" cy="298.3" r="1.3"/></g>
  <g font-family="Liberation Sans" font-size="5.2" fill="#666" text-anchor="middle">
    <text x="201.6" y="353.4" textLength="18.4" lengthAdjust="spacingAndGlyphs">12/09/24</text><text x="227.0" y="353.4" textLength="18.4" lengthAdjust="spacingAndGlyphs">01/10/24</text><text x="252.4" y="353.4" textLength="18.4" lengthAdjust="spacingAndGlyphs">18/10/24</text><text x="277.8" y="353.4" textLength="18.4" lengthAdjust="spacingAndGlyphs">06/11/24</text><text x="303.2" y="353.4" textLength="18.4" lengthAdjust="spacingAndGlyphs">25/11/24</text><text x="328.6" y="353.4" textLength="18.4" lengthAdjust="spacingAndGlyphs">12/12/24</text><text x="353.9" y="353.4" textLength="18.4" lengthAdjust="spacingAndGlyphs">31/12/24</text><text x="379.3" y="353.4" textLength="18.4" lengthAdjust="spacingAndGlyphs">17/01/25</text><text x="404.7" y="353.4" textLength="18.4" lengthAdjust="spacingAndGlyphs">05/02/25</text><text x="430.1" y="353.4" textLength="18.4" lengthAdjust="spacingAndGlyphs">24/02/25</text><text x="455.5" y="353.4" textLength="18.4" lengthAdjust="spacingAndGlyphs">13/03/25</text><text x="480.9" y="353.4" textLength="18.4" lengthAdjust="spacingAndGlyphs">01/04/25</text><text x="506.3" y="353.4" textLength="18.4" lengthAdjust="spacingAndGlyphs">18/04/25</text><text x="531.7" y="353.4" textLength="18.4" lengthAdjust="spacingAndGlyphs">07/05/25</text><text x="557.1" y="353.4" textLength="18.4" lengthAdjust="spacingAndGlyphs">26/05/25</text><text x="582.4" y="353.4" textLength="18.4" lengthAdjust="spacingAndGlyphs">12/06/25</text><text x="607.8" y="353.4" textLength="18.4" lengthAdjust="spacingAndGlyphs">01/07/25</text><text x="633.2" y="353.4" textLength="18.4" lengthAdjust="spacingAndGlyphs">18/07/25</text><text x="658.6" y="353.4" textLength="18.4" lengthAdjust="spacingAndGlyphs">06/08/25</text><text x="684.0" y="353.4" textLength="18.4" lengthAdjust="spacingAndGlyphs">25/08/25</text><text x="709.4" y="353.4" textLength="18.4" lengthAdjust="spacingAndGlyphs">11/09/25</text>
  </g>
</svg>

<!-- patrimonio x rentabilidade -->
<div class="a sk" style="left:176.8px;top:382.5px;font-size:7.25px;line-height:8px;color:#222;transform:scaleX(.94);transform-origin:0 50%">Patrimônio x Rentabilidade</div>
<svg class="a" style="left:261.8px;top:383px" width="7" height="7" viewBox="0 0 7 7"><circle cx="3.5" cy="3.5" r="2.9" fill="none" stroke="#444" stroke-width="0.6"/><path d="M3.5,3v2" stroke="#444" stroke-width="0.7"/><circle cx="3.5" cy="2" r="0.45" fill="#444"/></svg>

<div class="col" style="left:190.3px;color:#3b8ee6"><div class="h">FIIS</div><div class="s">Patrimônio</div><div>49,98%</div><div class="s">Rentabilidade</div><div>165,85%</div></div>
<div class="col" style="left:297.8px;color:#9b2131"><div class="h">STOCKS</div><div class="s">Patrimônio</div><div>12,60%</div><div class="s">Rentabilidade</div><div>159.281,31%</div></div>
<div class="col" style="left:352px;color:#2fc07a"><div class="h">FIAGRO</div><div class="s">Patrimônio</div><div>11,98%</div><div class="s">Rentabilidade</div><div>9,41%</div></div>
<div class="col" style="left:405.9px;color:#e23b4b"><div class="h">AÇÕES</div><div class="s">Patrimônio</div><div>10,85%</div><div class="s">Rentabilidade</div><div>-94,65%</div></div>
<div class="col" style="left:459.5px;color:#3c6aa8"><div class="h">REITS</div><div class="s">Patrimônio</div><div>6,82%</div><div class="s">Rentabilidade</div><div>-69,08%</div></div>
<div class="col" style="left:513.5px;color:#2b2b2b"><div class="h">CRIPTOMOE...</div><div class="s">Patrimônio</div><div>3,60%</div><div class="s">Rentabilidade</div><div>117,02%</div></div>
<div class="col" style="left:567.3px;color:#2b2b2b"><div class="h">FIDC</div><div class="s">Patrimônio</div><div>1,45%</div><div class="s">Rentabilidade</div><div>2,19%</div></div>
<div class="col" style="left:621px;color:#f7b136"><div class="h">TESOURO</div><div class="s">Patrimônio</div><div>0,97%</div><div class="s">Rentabilidade</div><div>8,39%</div></div>
<div class="col" style="left:675px;color:#2b2b2b"><div class="h">ETF</div><div class="s">Patrimônio</div><div>0,72%</div><div class="s">Rentabilidade</div><div>66,74%</div></div>

<div class="a" style="left:184px;top:434px;width:537.7px;height:2px;border-radius:1px;overflow:hidden;background:#2b2b2b">
  <div class="a" style="left:0;top:0;width:107px;height:2px;background:#3b8ee6"></div>
  <div class="a" style="left:107px;top:0;width:54.2px;height:2px;background:#9b2131"></div>
  <div class="a" style="left:161.2px;top:0;width:54.1px;height:2px;background:#2fc07a"></div>
  <div class="a" style="left:215.3px;top:0;width:53.7px;height:2px;background:#e23b4b"></div>
  <div class="a" style="left:269px;top:0;width:53.7px;height:2px;background:#3c6aa8"></div>
  <div class="a" style="left:430px;top:0;width:54px;height:2px;background:#f7b136"></div>
</div>

<!-- chat bubble -->
<div class="a" style="left:768.2px;top:384.8px;width:24.8px;height:24.8px;border-radius:50%;background:#a7c4e4;box-shadow:0 1px 2px rgba(0,0,0,0.15)"></div>
<svg class="a" style="left:774.8px;top:391.6px" width="13" height="12" viewBox="0 0 13 12"><path d="M3.5,1.2 h7.3 v5.6 M1.2,3 h7.8 v5.5 h-5.8 l-2,1.8z" fill="none" stroke="#3d4d5e" stroke-width="1"/></svg>
<svg class="a" style="left:760px;top:393px" width="7" height="9" viewBox="0 0 7 9"><g fill="#a9c2e0"><circle cx="1.6" cy="1.4" r="0.6"/><circle cx="4.7" cy="1.4" r="0.6"/><circle cx="1.6" cy="4.4" r="0.6"/><circle cx="4.7" cy="4.4" r="0.6"/><circle cx="1.6" cy="7.5" r="0.6"/><circle cx="4.7" cy="7.5" r="0.6"/></g></svg>
</body></html>
